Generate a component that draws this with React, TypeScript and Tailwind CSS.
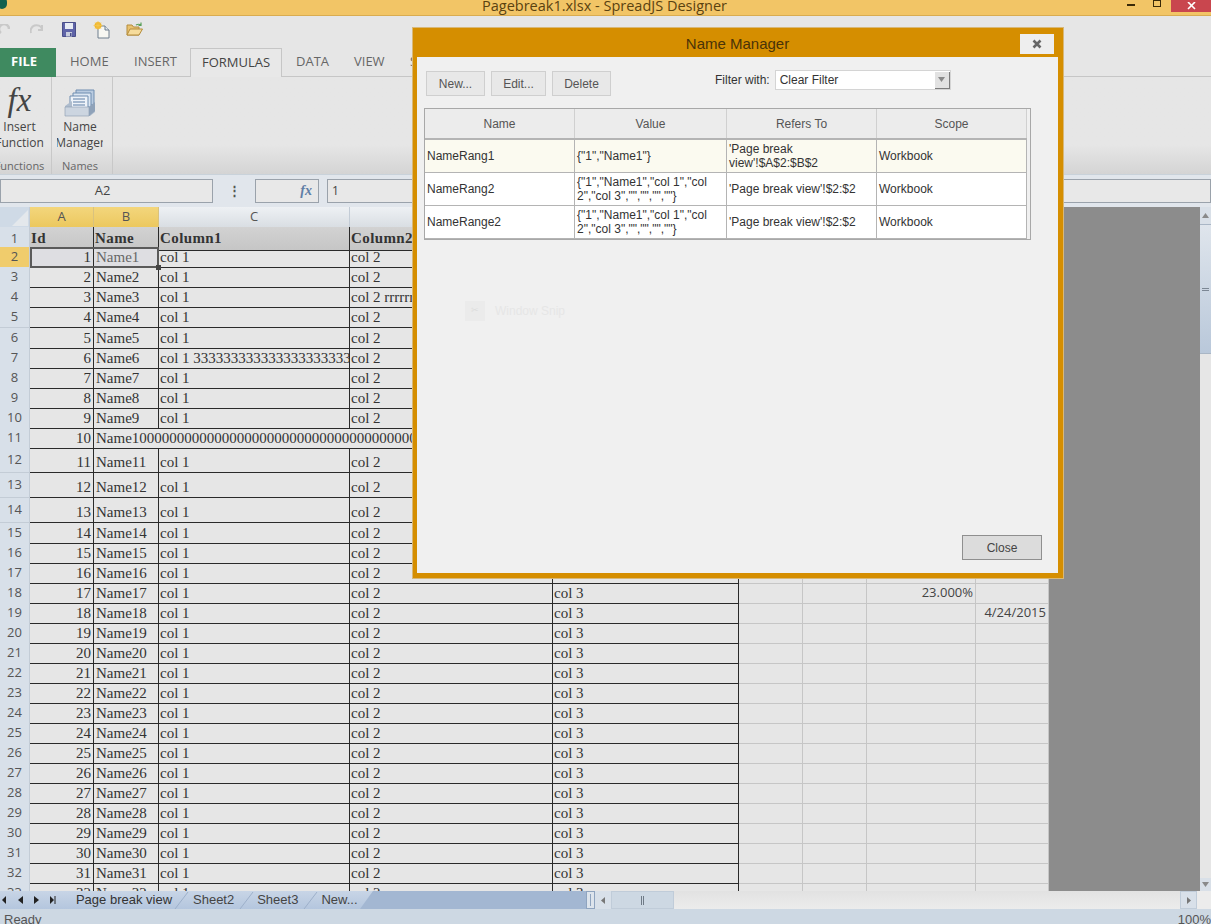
import React from 'react';

const UI = "font-['Open_Sans',sans-serif]";
const SERIF = "font-['Liberation_Serif',serif]";
const DLG = "font-['Liberation_Sans',sans-serif]";

const COLS = "grid-cols-[30px_64px_65px_191px_203px_186px_64px_64px_109px_73px]";

const rowHeight = (n: number) => {
  if (n === 5) return 'h-[21px]';
  if (n >= 12 && n <= 14) return 'h-[25px]';
  return 'h-[20px]';
};

const DARK = 'border-r border-b border-[#2a2a2a]';
const LIGHT = 'border-r border-b border-[#c6c6c6]';

const RowHead = ({ n }: { n: number }) => (
  <div className={`flex items-center justify-center text-[13px] text-[#555] border-r border-b border-[#c3ccd6] ${UI} ${n === 2 ? 'bg-[#f0cc6c]' : 'bg-[#d8e0e9]'}`}>
    {n}
  </div>
);

const Cell = ({ children, right, muted, className = '' }: { children?: React.ReactNode; right?: boolean; muted?: boolean; className?: string }) => (
  <div className={`${DARK} ${SERIF} text-[15px] leading-[19px] px-[2px] overflow-hidden whitespace-nowrap flex items-end ${right ? 'justify-end' : ''} ${muted ? 'text-[#666]' : 'text-[#333]'} ${className}`}>
    {children}
  </div>
);

const Blank = ({ children, className = '' }: { children?: React.ReactNode; className?: string }) => (
  <div className={`${LIGHT} ${UI} text-[13px] text-[#444] flex items-center justify-end px-[2px] whitespace-nowrap ${className}`}>{children}</div>
);

const DataRow = ({ n }: { n: number }) => {
  const id = n - 1;
  let c = 'col 1';
  let d = 'col 2';
  if (n === 7) c = 'col 1 3333333333333333333333333333333333';
  if (n === 4) d = 'col 2 rrrrrrrrrrrrrrrrrrrrrrrrrrrrrrrrr';
  const wide = n === 11;
  return (
    <div className={`grid ${COLS} ${rowHeight(n)}`}>
      <RowHead n={n} />
      <Cell right className={n === 2 ? 'bg-[#dedee2]' : ''}>{id}</Cell>
      {wide ? (
        <Cell className="col-span-3">Name1000000000000000000000000000000000000000000000000000</Cell>
      ) : (
        <>
          <Cell muted={n === 2} className={n === 2 ? 'bg-[#dedee2]' : ''}>Name{id}</Cell>
          <Cell className="pl-[1px]">{c}</Cell>
          <Cell className="pl-[1px]">{d}</Cell>
        </>
      )}
      <Cell className="pl-[1px]">{wide ? '' : 'col 3'}</Cell>
      <Blank />
      <Blank />
      <Blank>{n === 18 ? '23.000%' : ''}</Blank>
      <Blank>{n === 19 ? '4/24/2015' : ''}</Blank>
    </div>
  );
};

const ColHead = ({ label, active }: { label: string; active?: boolean }) => (
  <div className={`flex items-center justify-center text-[13px] text-[#555] border-r border-b ${UI} ${active ? 'bg-gradient-to-b from-[#f3d67c] to-[#ecc85e] border-[#d9c27e]' : 'bg-gradient-to-b from-[#eef1f4] to-[#d9dee3] border-[#c3ccd6]'}`}>
    {label}
  </div>
);

const HeaderTitle = ({ children }: { children: React.ReactNode }) => (
  <div className={`${DARK} ${SERIF} text-[15px] font-bold tracking-[0.4px] text-[#333] pl-[1px] flex items-center bg-gradient-to-b from-[#d2d2d2] to-[#c6c6c6]`}>{children}</div>
);

const Grid = () => {
  const rows: number[] = [];
  for (let i = 2; i <= 33; i++) rows.push(i);
  return (
    <div className="w-[1049px] shrink-0 relative">
      <div className={`grid ${COLS} h-[20px]`}>
        <div className="bg-[#cfdae6] border-r border-b border-[#c3ccd6] flex justify-end items-end">
          <svg width="18" height="18" viewBox="0 0 18 18"><path d="M17 1V17H1Z" fill="#e4e8ec" /></svg>
        </div>
        <ColHead label="A" active />
        <ColHead label="B" active />
        <ColHead label="C" />
        <ColHead label="D" />
        <ColHead label="E" />
        <ColHead label="F" />
        <ColHead label="G" />
        <ColHead label="H" />
        <ColHead label="I" />
      </div>
      <div className={`grid ${COLS} h-[20px]`}>
        <RowHead n={1} />
        <HeaderTitle>Id</HeaderTitle>
        <HeaderTitle>Name</HeaderTitle>
        <HeaderTitle>Column1</HeaderTitle>
        <HeaderTitle>Column2</HeaderTitle>
        <HeaderTitle>Column3</HeaderTitle>
        <Blank /><Blank /><Blank /><Blank />
      </div>
      {rows.map(n => <DataRow key={n} n={n} />)}
      {/* selected range A2:B2 */}
      <div className="absolute left-[30px] top-[40px] w-[129px] h-[21px] border-2 border-[#5a5a5a]" />
      <div className="absolute left-[156px] top-[58px] w-[5px] h-[5px] bg-[#444]" />
    </div>
  );
};

const NameManagerIcon = () => (
  <svg width="32" height="30" viewBox="0 0 32 30">
    <path d="M12 3H30V18H12Z" fill="#b9cbe0" stroke="#6f8db0" />
    <path d="M9 6H27V20H9Z" fill="#dbe6f2" stroke="#6f8db0" />
    <path d="M6 9H24V22H6Z" fill="#eef3f9" stroke="#6f8db0" />
    <path d="M9 12H21M9 15H21M9 18H21" stroke="#5d7ea5" strokeWidth="1.2" />
    <path d="M1 19L8 14V22H26L31 16V25L26 29H1Z" fill="#aebccd" />
    <path d="M1 20H25V29H1Z" fill="#ccd5e0" stroke="#8b9bb0" strokeWidth="0.6" />
    <path d="M25 20L31 15V24L25 29Z" fill="#8fa2b9" />
  </svg>
);

const QuickBar = () => (
  <div className="h-[32px] bg-[#e6e6e6] flex items-center relative pl-[2px] pb-[5px]">
    <svg width="10" height="12" viewBox="0 0 10 12" className="ml-[-2px]"><path d="M1 9A5 5 0 1 1 9 5" fill="none" stroke="#c9c9c9" strokeWidth="2.5" /></svg>
    <svg width="14" height="12" viewBox="0 0 14 12" className="ml-[20px]"><path d="M1 9A5.5 5.5 0 0 1 12 5M12 1V6H8" fill="none" stroke="#c9c9c9" strokeWidth="2" /></svg>
    <svg width="14" height="15" viewBox="0 0 14 15" className="ml-[18px]">
      <path d="M0.5 0.5H13.5V14.5H0.5Z" fill="#5f64a8" stroke="#4a4f8a" />
      <path d="M3 1H11V7H3Z" fill="#e8ecf4" />
      <path d="M4 10H10V14.5H4Z" fill="#c9cede" />
      <path d="M8 11H9.5V14H8Z" fill="#4a4f8a" />
    </svg>
    <svg width="18" height="18" viewBox="0 0 18 18" className="ml-[17px]">
      <path d="M5 5H12L16 9V17H5Z" fill="#f7f7f2" stroke="#6e7e8e" />
      <path d="M12 5V9H16" fill="#dfe6ee" stroke="#6e7e8e" />
      <circle cx="5" cy="4.5" r="3.5" fill="#f0b428" />
      <path d="M5 0V9M0.5 4.5H9.5M2 1.5L8 7.5M8 1.5L2 7.5" stroke="#f4c850" strokeWidth="0.8" />
    </svg>
    <svg width="17" height="15" viewBox="0 0 17 15" className="ml-[15px]">
      <path d="M1 3H6L7.5 5H13V13H1Z" fill="#e9c270" stroke="#b48c3c" />
      <path d="M1 13L4 7H16.5L13 13Z" fill="#f6dc9c" stroke="#b48c3c" />
      <path d="M10 3A4 3 0 0 1 15 3M15 0.5V3.5H12.5" fill="none" stroke="#5aa05a" strokeWidth="1.2" />
    </svg>
  </div>
);

const TabText = ({ children, className }: { children: React.ReactNode; className: string }) => (
  <span className={`text-[13px] text-[#666] ${className}`}>{children}</span>
);

const TabRow = () => (
  <div className={`h-[29px] bg-[#e6e6e6] border-b border-[#c6c6c6] flex items-center ${UI}`}>
    <div className="w-[56px] h-[29px] bg-[#3f8a60] text-white text-[13px] font-bold flex items-center pl-[11px] shrink-0">FILE</div>
    <TabText className="ml-[14px] w-[38px] text-center">HOME</TabText>
    <TabText className="ml-[26px] w-[42px] text-center">INSERT</TabText>
    <div className="ml-[14px] w-[92px] h-[29px] border border-b-0 border-[#c6c6c6] bg-[#e8e8e8] text-[13px] text-[#444] flex items-center justify-center">FORMULAS</div>
    <TabText className="ml-[14px] w-[32px] text-center">DATA</TabText>
    <TabText className="ml-[26px] w-[30px] text-center">VIEW</TabText>
    <TabText className="ml-[26px]">SETTINGS</TabText>
  </div>
);

const Ribbon = () => (
  <div className={`h-[98px] bg-gradient-to-b from-[#e6e6e6] from-70% to-[#d4d4d4] flex border-b border-[#c9d2da] ${UI}`}>
    <div className="w-[52px] border-r border-[#c8c8c8] flex flex-col items-center shrink-0 overflow-hidden pr-[12px]">
      <div className={`h-[41px] pt-[7px] text-[33px] leading-[32px] italic text-[#444] ${SERIF}`}>fx</div>
      <div className="w-[40px] flex flex-col items-center text-[12px] leading-[16px] text-[#444] whitespace-nowrap mt-[2px]">
        <span>Insert</span>
        <span>Function</span>
      </div>
      <div className="text-[11px] text-[#666] mt-[7px] whitespace-nowrap flex justify-center w-[40px]">Functions</div>
    </div>
    <div className="w-[61px] border-r border-[#c8c8c8] flex flex-col items-center shrink-0 overflow-hidden pr-[4px]">
      <div className="h-[41px] pt-[10px]"><NameManagerIcon /></div>
      <div className="w-[46px] overflow-hidden flex flex-col items-center text-[12px] leading-[16px] text-[#444] whitespace-nowrap mt-[2px]">
        <span>Name</span>
        <span>Manager</span>
      </div>
      <div className="text-[11px] text-[#666] mt-[7px]">Names</div>
    </div>
  </div>
);

const FormulaBar = () => (
  <div className={`h-[32px] bg-[#e1e6ec] flex items-center pb-[1px] ${UI}`}>
    <div className="w-[213px] h-[24px] bg-[#e8e8e8] border border-[#9aa2ab] text-[13px] text-[#444] flex items-center justify-center pr-[8px] shrink-0">A2</div>
    <div className="w-[42px] flex justify-center text-[#555] text-[13px] font-bold shrink-0">⋮</div>
    <div className="w-[64px] h-[24px] bg-[#e8e8e8] border border-[#9aa2ab] flex items-center justify-end pr-[6px] shrink-0">
      <span className={`italic font-bold text-[14px] text-[#5f7ea6] ${SERIF}`}>fx</span>
    </div>
    <div className="ml-[8px] flex-1 h-[24px] bg-[#e8e8e8] border border-[#9aa2ab] text-[12px] text-[#444] flex items-center pl-[4px]">1</div>
  </div>
);

const RightScroll = () => (
  <div className="w-[11px] shrink-0 bg-[#e6e6e6] flex flex-col">
    <div className="h-[18px] bg-[#d9e0e8] border-b border-[#a9b6c5] flex items-center justify-center">
      <svg width="7" height="5" viewBox="0 0 7 5"><path d="M3.5 0L7 5H0Z" fill="#8a8a8a" /></svg>
    </div>
    <div className="h-[129px] bg-gradient-to-b from-[#dfe5ec] to-[#b9c8da] border-b border-[#a9b6c5] flex items-center justify-center">
      <div className="w-[7px] h-[3px] border-y border-[#7c8794]" />
    </div>
    <div className="flex-1" />
    <div className="h-[13px] bg-[#d9e0e8] flex items-center justify-center">
      <svg width="7" height="5" viewBox="0 0 7 5"><path d="M0 0H7L3.5 5Z" fill="#8a8a8a" /></svg>
    </div>
  </div>
);

const TabBar = () => (
  <div className={`h-[18px] flex text-[12px] ${DLG}`}>
    <div className="w-[586px] shrink-0 bg-gradient-to-b from-[#c8d5e6] to-[#b4c6de] flex items-center overflow-hidden relative">
      <div className="flex items-center text-[#222] w-[72px] pl-[2px] shrink-0">
        <svg width="56" height="10" viewBox="0 0 56 10">
          <path d="M4 1L0 5L4 9Z" fill="#222" />
          <path d="M21 1L16 5L21 9Z" fill="#222" />
          <path d="M32 1L37 5L32 9Z" fill="#222" />
          <path d="M48 1L52 5L48 9Z" fill="#222" />
          <path d="M53 1V9" stroke="#222" />
        </svg>
      </div>
      <div className="h-[18px] w-[104px] flex items-center justify-center text-[#333] text-[13px] shrink-0">Page break view</div>
      <span className="text-[#444] ml-[17px] text-[13px]">Sheet2</span>
      <span className="text-[#444] ml-[23px] text-[13px]">Sheet3</span>
      <span className="text-[#444] ml-[23px] text-[13px]">New...</span>
      {/* slanted tab edges, then the empty part of the strip */}
      <svg width="586" height="18" viewBox="0 0 586 18" className="absolute left-0 top-0">
        <path d="M175 18L188 1M240 18L253 1M304 18L317 1" stroke="#9db0ca" fill="none" />
        <path d="M360 18L373 0H586V18Z" fill="#a3b7d2" />
      </svg>
    </div>
    <div className="w-[9px] shrink-0 bg-[#dde4ec] border border-[#8fa4bf] flex items-center justify-center"><div className="w-[1px] h-[12px] bg-[#8fa4bf]" /></div>
    <div className="w-[16px] shrink-0 bg-[#d8e0e9] flex items-center justify-center">
      <svg width="4" height="7" viewBox="0 0 4 7"><path d="M4 0L0 3.5L4 7Z" fill="#777" /></svg>
    </div>
    <div className="w-[63px] shrink-0 bg-[#cdd8e3] border border-[#c0ccd9] flex items-center justify-center"><div className="w-[3px] h-[9px] border-x border-[#6f7a86]" /></div>
    <div className="flex-1 bg-gradient-to-b from-[#e2e2e2] to-[#ececec]" />
    <div className="w-[17px] shrink-0 bg-[#d8e0e9] border border-[#c0ccd9] flex items-center justify-center">
      <svg width="4" height="7" viewBox="0 0 4 7"><path d="M0 0L4 3.5L0 7Z" fill="#777" /></svg>
    </div>
    <div className="w-[14px] shrink-0 bg-[#ececec]" />
  </div>
);

const StatusBar = () => (
  <div className={`h-[15px] bg-[#cdd8e3] flex justify-between text-[13px] leading-[22px] text-[#555] pl-[4px] overflow-hidden ${DLG}`}>
    <span>Ready</span>
    <span>100%</span>
  </div>
);

const DlgButton = ({ children, className }: { children: React.ReactNode; className: string }) => (
  <div className={`h-[25px] bg-[#e8e8e8] border border-[#cfcfcf] text-[12px] text-[#555] flex items-center justify-center ${className}`}>{children}</div>
);

const names = [
  { name: 'NameRang1', value: '{"1","Name1"}', refers: "'Page break view'!$A$2:$B$2", bg: 'bg-[#fbfaf0]' },
  { name: 'NameRang2', value: '{"1","Name1","col 1","col 2","col 3","","","",""}', refers: "'Page break view'!$2:$2", bg: 'bg-white' },
  { name: 'NameRange2', value: '{"1","Name1","col 1","col 2","col 3","","","",""}', refers: "'Page break view'!$2:$2", bg: 'bg-white' },
];

const NameTable = () => (
  <div className="w-[607px] h-[132px] ml-[7px] mt-[12px] border border-[#a8a8a8] bg-[#f0f0f0] text-[12px] text-[#333]">
    <div className="w-[602px] grid grid-cols-[150px_152px_150px_150px] h-[31px] bg-[#ececec] border-b-2 border-[#b4b4b4] text-[#555] text-center">
      {['Name', 'Value', 'Refers To', 'Scope'].map(h => (
        <div key={h} className="flex items-center justify-center border-r border-[#d0d0d0]">{h}</div>
      ))}
    </div>
    {names.map(r => (
      <div key={r.name} className={`w-[602px] grid grid-cols-[150px_152px_150px_150px] h-[33px] border-b border-[#b4b4b4] ${r.bg}`}>
        <div className="flex items-center px-[2px] border-r border-[#b4b4b4]">{r.name}</div>
        <div className="flex items-center px-[2px] leading-[14px] border-r border-[#b4b4b4]">{r.value}</div>
        <div className="flex items-center px-[2px] leading-[14px] border-r border-[#b4b4b4]">{r.refers}</div>
        <div className="flex items-center px-[2px] border-r border-[#b4b4b4]">Workbook</div>
      </div>
    ))}
  </div>
);

const NameManager = () => (
  <div className={`absolute left-[413px] top-[28px] w-[650px] h-[550px] bg-[#d58e00] shadow-[0_0_0_1px_#d8b878] flex flex-col ${DLG}`}>
    <div className="h-[29px] flex items-center justify-center relative shrink-0 pt-[4px] pr-[1px]">
      <span className="text-[15px] text-[#4a3308]">Name Manager</span>
      <div className="absolute right-[9px] top-[6px] w-[34px] h-[20px] bg-[#eeeeee] flex items-center justify-center">
        <svg width="10" height="10" viewBox="0 0 10 10"><path d="M1.5 1.5L8.5 8.5M8.5 1.5L1.5 8.5" stroke="#666" strokeWidth="2.6" /></svg>
      </div>
    </div>
    <div className="flex-1 ml-[4px] mr-[5px] mb-[5px] bg-[#f0f0f0] flex flex-col relative">
      <div className="flex items-start pt-[13px] pl-[9px]">
        <DlgButton className="w-[59px] mt-[1px]">New...</DlgButton>
        <DlgButton className="w-[55px] ml-[6px] mt-[1px]">Edit...</DlgButton>
        <DlgButton className="w-[59px] ml-[6px] mt-[1px]">Delete</DlgButton>
        <div className="ml-[104px] h-[20px] flex items-center text-[12px] text-[#333]">Filter with:</div>
        <div className="ml-[5px] w-[176px] h-[20px] bg-white border border-[#d4d4d4] flex items-center justify-between text-[12px] text-[#333] pl-[4px]">
          <span>Clear Filter</span>
          <div className="w-[15px] h-[17px] bg-[#e2e2e2] border-r border-b border-[#7c7c7c] flex items-center justify-center">
            <svg width="7" height="5" viewBox="0 0 7 5"><path d="M0 0H7L3.5 5Z" fill="#8a8a8a" /></svg>
          </div>
        </div>
      </div>
      <NameTable />
      {/* faint taskbar ghost left in the capture */}
      <div className="ml-[48px] mt-[61px] flex items-center gap-[10px] text-[12px] text-[#e6e6e6]">
        <div className="w-[20px] h-[20px] bg-[#ebebeb] flex items-center justify-center text-[9px] text-[#dcdcdc]">✂</div>
        <span>Window Snip</span>
      </div>
      <div className="flex-1 flex justify-end items-end pr-[16px] pb-[13px]">
        <div className="w-[80px] h-[25px] bg-[#dcdcdc] border border-[#8f8f8f] text-[12px] text-[#444] flex items-center justify-center">Close</div>
      </div>
    </div>
  </div>
);

export default function App() {
  return (
    <div className="w-[1211px] h-[924px] relative overflow-hidden flex flex-col bg-[#e6e6e6]">
      <div className={`h-[16px] shrink-0 bg-[#f2c566] border-b border-[#d9ac50] relative flex justify-center overflow-hidden text-[14.5px] leading-[11px] text-[#5a4210] pr-[2px] ${UI}`}>
        <div className="absolute left-[-3px] top-[-3px] w-[10px] h-[12px] rounded-full bg-[#12614e]" />
        <span>Pagebreak1.xlsx - SpreadJS Designer</span>
        <div className="absolute right-0 top-0 h-[12px] w-[40px] bg-[#c9464e] flex items-center justify-center">
          <svg width="9" height="9" viewBox="0 0 9 9"><path d="M1 0L8 7M8 0L1 7" stroke="white" strokeWidth="1.6" /></svg>
        </div>
        <div className="absolute right-[50px] top-0 w-[8px] h-[7px] border border-[#3a2a08]" />
        <div className="absolute right-[76px] top-[4px] w-[8px] h-[2px] bg-[#3a2a08]" />
      </div>
      <QuickBar />
      <TabRow />
      <Ribbon />
      <FormulaBar />
      <div className="flex-1 flex overflow-hidden min-h-0">
        <Grid />
        <div className="flex-1 bg-[#8c8c8c]" />
        <RightScroll />
      </div>
      <TabBar />
      <StatusBar />
      <NameManager />
    </div>
  );
}
